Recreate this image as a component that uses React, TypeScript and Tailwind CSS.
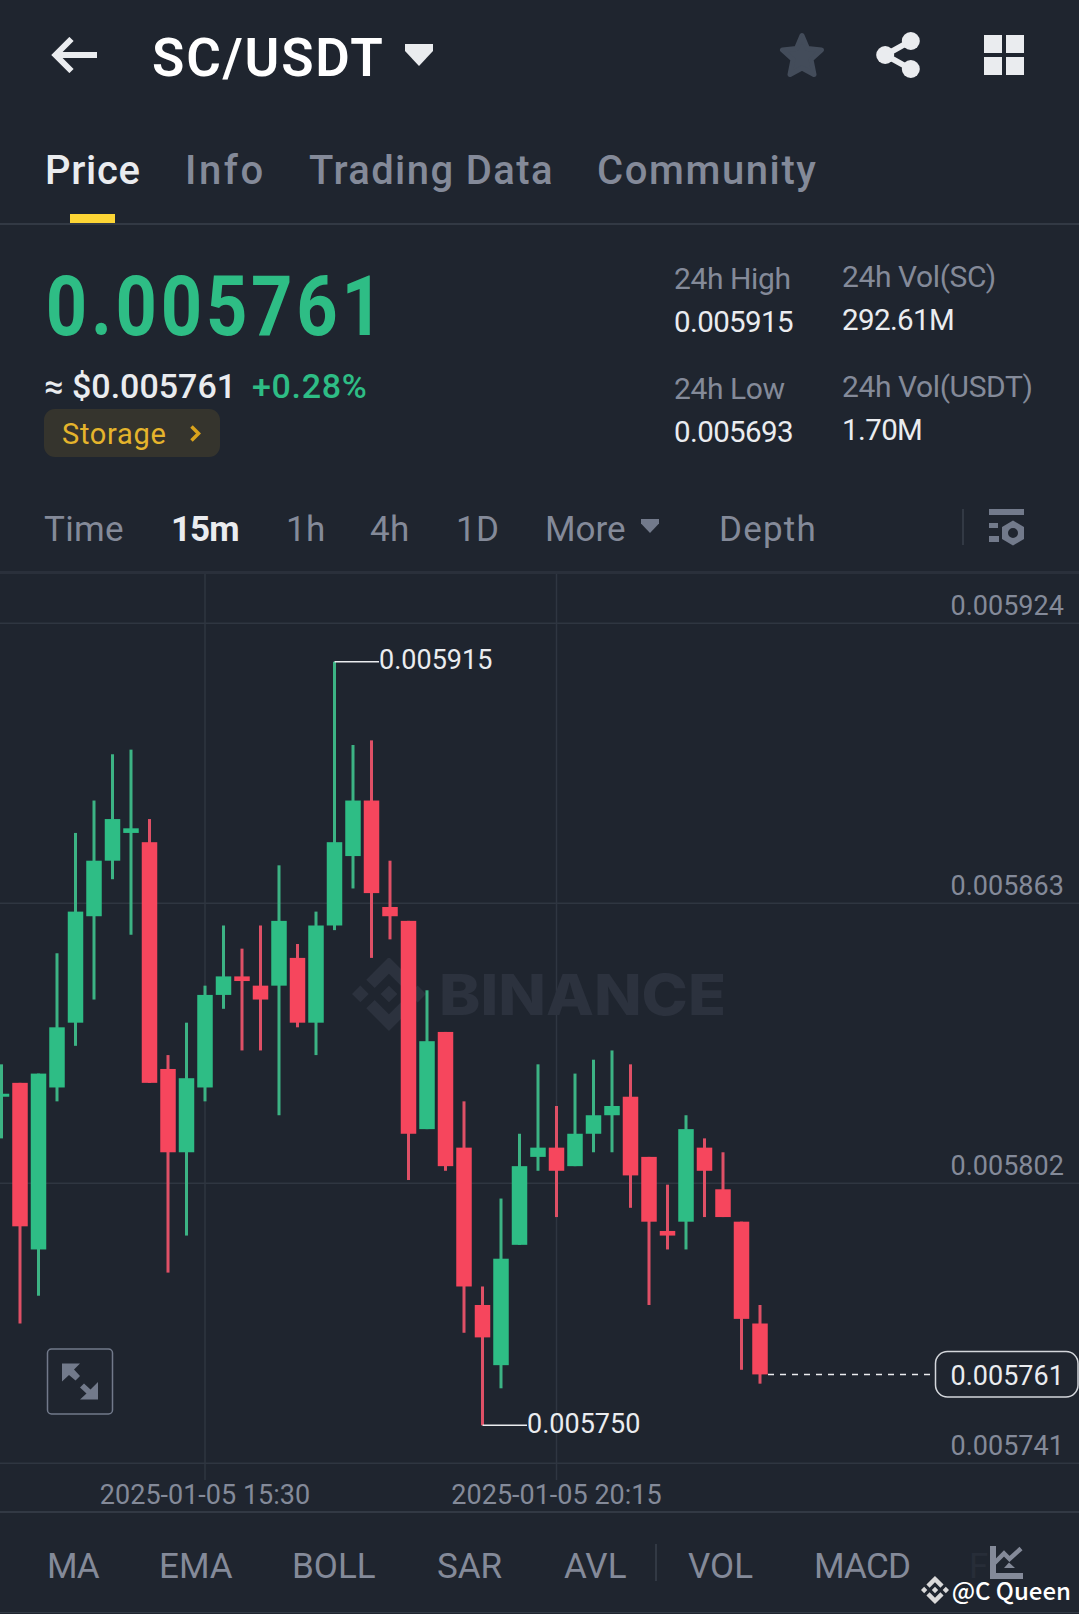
import clsx from "clsx";
import { SiBinance } from "react-icons/si";

const tabs = [
  { label: "Price", width: "w-[140px]", tracking: "tracking-[0.7px]" },
  { label: "Info", width: "w-[124px]", tracking: "tracking-[2.6px]" },
  { label: "Trading Data", width: "w-[288px]", tracking: "tracking-[1.4px]" },
  { label: "Community", width: "w-[230px]", tracking: "tracking-[1.6px]" },
];

const stats = [
  [
    { label: "24h High", value: "0.005915" },
    { label: "24h Low", value: "0.005693" },
  ],
  [
    { label: "24h Vol(SC)", value: "292.61M" },
    { label: "24h Vol(USDT)", value: "1.70M" },
  ],
];

const intervals = [
  { label: "Time", width: "w-[127px]" },
  { label: "15m", width: "w-[115px]" },
  { label: "1h", width: "w-[84px]" },
  { label: "4h", width: "w-[86px]" },
  { label: "1D", width: "w-[89px]" },
];

const overlays = [
  { label: "MA", width: "w-[112px]" },
  { label: "EMA", width: "w-[133px]" },
  { label: "BOLL", width: "w-[145px]" },
  { label: "SAR", width: "w-[127px]" },
  { label: "AVL", width: "w-[91px]" },
];

// [open, high, low, close] in units of 0.000001
const candles = [
  [5821, 5828, 5812, 5821],
  [5824, 5824, 5772, 5793],
  [5788, 5826, 5778, 5826],
  [5823, 5852, 5820, 5836],
  [5837, 5878, 5832, 5861],
  [5860, 5885, 5842, 5872],
  [5872, 5895, 5868, 5881],
  [5878, 5896, 5856, 5879],
  [5876, 5881, 5824, 5824],
  [5827, 5830, 5783, 5809],
  [5809, 5837, 5791, 5825],
  [5823, 5845, 5820, 5843],
  [5843, 5858, 5840, 5847],
  [5847, 5853, 5831, 5846],
  [5845, 5858, 5831, 5842],
  [5845, 5871, 5817, 5859],
  [5851, 5854, 5836, 5837],
  [5837, 5861, 5830, 5858],
  [5858, 5915, 5857, 5876],
  [5873, 5897, 5866, 5885],
  [5885, 5898, 5851, 5865],
  [5862, 5872, 5855, 5860],
  [5859, 5859, 5803, 5813],
  [5814, 5844, 5814, 5833],
  [5835, 5835, 5805, 5806],
  [5810, 5820, 5770, 5780],
  [5776, 5780, 5750, 5769],
  [5763, 5799, 5758, 5786],
  [5789, 5813, 5789, 5806],
  [5808, 5828, 5805, 5810],
  [5810, 5819, 5795, 5805],
  [5806, 5826, 5806, 5813],
  [5813, 5829, 5809, 5817],
  [5817, 5831, 5809, 5819],
  [5821, 5828, 5797, 5804],
  [5808, 5808, 5776, 5794],
  [5792, 5802, 5788, 5791],
  [5794, 5817, 5788, 5814],
  [5810, 5812, 5795, 5805],
  [5801, 5809, 5795, 5795],
  [5794, 5794, 5762, 5773],
  [5772, 5776, 5759, 5761],
];

const gridRows = [
  { y: 49.3, label: "0.005924" },
  { y: 329.3, label: "0.005863" },
  { y: 609.3, label: "0.005802" },
  { y: 889.3, label: "0.005741" },
];

const gridColumns = [
  { x: 205, label: "2025-01-05 15:30" },
  { x: 556.5, label: "2025-01-05 20:15" },
];

const candleX = (index: number) => 1.5 + index * 18.5;
const priceY = (price: number) => 87.7 + (5915 - price) * 4.628;

function Caret({ className }: { className: string }) {
  return (
    <svg viewBox="0 0 28 22" className={className} fill="currentColor" preserveAspectRatio="none">
      <path d="M0 0H28V7L14 22L0 7Z" />
    </svg>
  );
}

function Header() {
  return (
    <header className="flex h-[110px] items-center pl-[51px] text-[#eaecef]">
      <svg viewBox="0 0 46 36" className="h-[36px] w-[46px]" fill="none" stroke="currentColor" strokeWidth="6">
        <path d="M46 18H5M20.5 2L4.5 18L20.5 34" />
      </svg>
      <h1 className="w-[308px] pt-[6px] pl-[55px] text-[53px] leading-none font-semibold tracking-[1.8px] whitespace-nowrap text-white">
        SC/USDT
      </h1>
      <Caret className="h-[22px] w-[28px]" />
      <svg viewBox="0 0 46 46" className="ml-[346px] h-[46px] w-[46px] text-[#434c5a]" fill="currentColor" stroke="currentColor" strokeWidth="5" strokeLinejoin="round">
        <path d="M23 3.500L28.500 16.500L42.500 18L32 27.500L35 42.500L23 36L11 42.500L14 27.500L3.500 18L17.500 16.500Z" />
      </svg>
      <svg viewBox="0 0 44 46" className="ml-[51px] h-[46px] w-[44px]" fill="currentColor">
        <path d="M34.500 9L9.500 23L34.500 37" fill="none" stroke="currentColor" strokeWidth="6" />
        <circle cx="9.200" cy="23" r="9" />
        <circle cx="34.800" cy="9" r="9" />
        <circle cx="34.800" cy="37" r="9" />
      </svg>
      <div className="ml-[64px] grid grid-cols-2 gap-[4px]">
        <span className="size-[18px] bg-current" />
        <span className="size-[18px] bg-current" />
        <span className="size-[18px] bg-current" />
        <span className="size-[18px] bg-current" />
      </div>
    </header>
  );
}

function Tabs() {
  return (
    <nav className="flex h-[115px] border-b-2 border-[#323944] pl-[45px] text-[40px] font-medium">
      {tabs.map((tab, index) => (
        <div key={tab.label} className={clsx("shrink-0", tab.width)}>
          <div className="inline-flex flex-col items-center">
            <span
              className={clsx(
                "h-[104px] pt-[17px] leading-[87px] whitespace-nowrap",
                tab.tracking,
                index === 0 ? "text-[#eaecef]" : "text-[#848a99]"
              )}
            >
              {tab.label}
            </span>
            {index === 0 && <span className="h-[9px] w-[45px] bg-[#fcd535]" />}
          </div>
        </div>
      ))}
    </nav>
  );
}

function Summary() {
  return (
    <section className="flex h-[262px] pl-[44px]">
      <div className="w-[632px] pt-[40px]">
        <div className="w-fit origin-left scale-x-[0.87] pl-[2px] text-[83px] leading-[84px] font-bold tracking-[4.3px] text-[#2ebd85]">
          0.005761
        </div>
        <div className="mt-[19px] flex h-[36px] items-center text-[34px] leading-none font-medium whitespace-nowrap">
          <span className="w-[28px] text-[#eaecef]">≈</span>
          <span className="w-[180px] text-[#eaecef]">$0.005761</span>
          <span className="tracking-[0.7px] text-[#2ebd85]">+0.28%</span>
        </div>
        <div className="mt-[5px] flex h-[48px] w-[176px] items-center rounded-[11px] bg-[#35342d] pl-[18px] text-[29px] leading-none tracking-[0.7px] text-[#e5b42c]">
          <span className="w-[128px] pt-[2px]">Storage</span>
          <svg viewBox="0 0 11 17" className="h-[17px] w-[11px]" fill="none" stroke="#d9a31c" strokeWidth="3.500">
            <path d="M1.500 1.500L8.500 8.500L1.500 15.500" />
          </svg>
        </div>
      </div>
      {stats.map((column, index) => (
        <div
          key={index}
          className={clsx(
            "flex flex-col gap-[23px] whitespace-nowrap",
            index === 0 ? "w-[168px] pt-[32px]" : "pt-[30px]"
          )}
        >
          {column.map((stat) => (
            <div key={stat.label} className="-ml-[2px]">
              <div className="text-[30px] leading-[43px] tracking-[-0.4px] text-[#848a99]">{stat.label}</div>
              <div className="text-[29.500px] leading-[44px] tracking-[-0.6px] text-[#eaecef]">{stat.value}</div>
            </div>
          ))}
        </div>
      ))}
    </section>
  );
}

function Intervals() {
  return (
    <div className="flex h-[87px] items-center border-b-[3px] border-[#2a303b] pl-[44px] text-[35px] leading-none text-[#848a99]">
      {intervals.map((interval) => (
        <span
          key={interval.label}
          className={clsx(
            "shrink-0",
            interval.width,
            interval.label === "15m" ? "font-bold tracking-[-1px] text-[#eaecef]" : "tracking-[0.3px]"
          )}
        >
          {interval.label}
        </span>
      ))}
      <span className="w-[96px]">More</span>
      <Caret className="-mt-[6px] h-[14px] w-[18px] text-[#727a8b]" />
      <span className="ml-[60px] w-[243px] tracking-[1.200px]">Depth</span>
      <span className="-mt-[5px] h-[36px] w-[2px] bg-[#323944]" />
      <svg viewBox="0 0 35 38" className="-mt-[4px] ml-[25px] h-[38px] w-[35px] text-[#727a8b]" fill="currentColor">
        <path d="M0 1H35V7H0ZM0 15H9V20H0ZM0 28H10V34H0Z" />
        <path fillRule="evenodd" d="M24 12.500L35 19V31L24 37.500L13 31V19ZM24 20A5 5 0 1 0 24 30A5 5 0 1 0 24 20Z" />
      </svg>
    </div>
  );
}

function Chart() {
  const lastY = priceY(5761);
  const lowY = priceY(5750);

  return (
    <svg viewBox="0 0 1079 937" className="block h-[937px] w-[1079px] text-[27px]">
      <g stroke="#2f3641" strokeWidth="1.500">
        {gridRows.map((row) => (
          <line key={row.label} x1="0" x2="1079" y1={row.y} y2={row.y} />
        ))}
        {gridColumns.map((column) => (
          <line key={column.label} x1={column.x} x2={column.x} y1="0" y2="906" />
        ))}
      </g>

      <SiBinance x="352" y="383" size="74" color="#2c323e" />
      <text
        x="439"
        y="440.500"
        className="text-[57px] font-extrabold"
        fontFamily="Inter"
        fill="#2c323e"
        textLength="287"
        lengthAdjust="spacingAndGlyphs"
      >
        BINANCE
      </text>

      {candles.map(([open, high, low, close], index) => {
        const up = close >= open;
        const top = priceY(Math.max(open, close));
        const height = Math.abs(open - close) * 4.628;
        return (
          <g key={index}>
            <rect
              x={candleX(index) - 1.5}
              y={priceY(high)}
              width="3"
              height={(high - low) * 4.628}
              fill={up ? "#3cb384" : "#df5066"}
            />
            <rect
              x={candleX(index) - 7.75}
              y={height === 0 ? top - 3 : top}
              width="15.500"
              height={Math.max(height, 3)}
              fill={up ? "#2ebd85" : "#f6465d"}
            />
          </g>
        );
      })}

      <g stroke="#eaecef" strokeWidth="1.500">
        <line x1="334.500" x2="379" y1="87.700" y2="87.700" />
        <line x1="482.500" x2="527" y1={lowY} y2={lowY} />
        <line x1="768" x2="932" y1={lastY} y2={lastY} strokeDasharray="6 6" />
      </g>
      <rect x="935.500" y="777.500" width="142.500" height="45.500" rx="12" fill="#1f252f" stroke="#d3d6db" strokeWidth="1.500" />

      <g fill="#eaecef">
        <text x="379" y="95">0.005915</text>
        <text x="527" y="859">0.005750</text>
        <text x="950.500" y="811">0.005761</text>
      </g>
      <g fill="#848a99">
        {gridRows.map((row) => (
          <text key={row.label} x="950.500" y={row.y - 8}>
            {row.label}
          </text>
        ))}
        {gridColumns.map((column) => (
          <text key={column.label} x={column.x} y="930" textAnchor="middle">
            {column.label}
          </text>
        ))}
      </g>

      <g transform="translate(47.500 775)">
        <rect width="65" height="65" rx="4" fill="none" stroke="#727a8b" strokeWidth="1.500" />
        <path
          d="M14.500 14.500H32.500L26.500 20.500L32.500 27L28 31.500L21.500 26L14.500 32.500ZM50.500 50.500H32.500L39 44.500L32.500 38.500L36.500 34.500L43 40.500L50.500 33Z"
          fill="#727a8b"
        />
      </g>
    </svg>
  );
}

function Indicators() {
  return (
    <footer className="flex h-[102px] items-center border-t-2 border-b border-[#323944] pt-[7px] pl-[47px] text-[35px] leading-none text-[#848a99]">
      {overlays.map((item) => (
        <span key={item.label} className={clsx("shrink-0", item.width, item.label === "MA" && "tracking-[-1px]")}>
          {item.label}
        </span>
      ))}
      <span className="-mt-[8px] mr-[31px] h-[37px] w-[2px] shrink-0 bg-[#323944]" />
      <span className="w-[126px]">VOL</span>
      <span className="w-[155px] tracking-[-0.8px]">MACD</span>
      <span className="w-[21px] text-[#272d38]">F</span>
      <svg viewBox="0 0 33 33" className="-mt-[7px] h-[33px] w-[33px]" fill="currentColor">
        <path d="M0 0H6V27H33V33H0Z" />
        <path d="M4 17.500L14 7.500L19.500 13L31 2.500" fill="none" stroke="currentColor" strokeWidth="4.500" />
        <path d="M14 22L19 16.500L25 22Z" />
      </svg>
    </footer>
  );
}

function App() {
  return (
    <div className="relative h-[1614px] w-[1079px] overflow-hidden bg-[#1f252f] font-[Roboto,sans-serif]">
      <Header />
      <Tabs />
      <Summary />
      <Intervals />
      <Chart />
      <Indicators />
      <div className="absolute right-[8px] bottom-[6px] flex h-[36px] items-center gap-[3px] font-['Noto_Sans_CJK_SC',sans-serif] text-[24px] leading-none font-medium whitespace-nowrap text-white">
        <SiBinance className="size-[28px] text-[#d9d9d9]" />
        <span>@C Queen</span>
      </div>
    </div>
  );
}

export default App;
